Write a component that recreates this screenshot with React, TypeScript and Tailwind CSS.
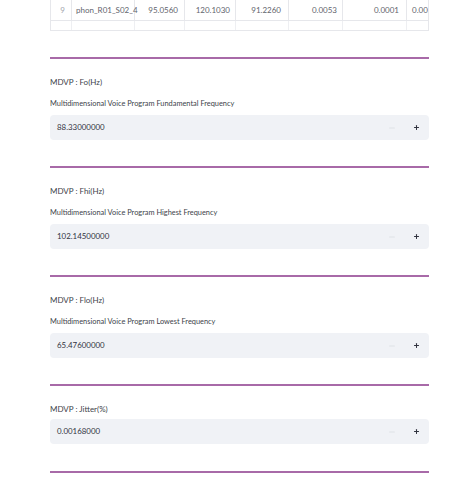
import { Minus, Plus } from 'lucide-react';

const cols = [
  { w: 'w-[21px]', text: '9', cls: 'justify-end pr-[6px] text-[#a3a6ad]' },
  { w: 'w-[63px]', text: 'phon_R01_S02_4', cls: 'justify-start pl-[4px]' },
  { w: 'w-[50px]', text: '95.0560', cls: 'justify-end pr-[6px]' },
  { w: 'w-[51px]', text: '120.1030', cls: 'justify-end pr-[5px]' },
  { w: 'w-[53px]', text: '91.2260', cls: 'justify-end pr-[7px]' },
  { w: 'w-[54px]', text: '0.0053', cls: 'justify-end pr-[5px]' },
  { w: 'w-[64px]', text: '0.0001', cls: 'justify-end pr-[7px]' },
];

const fields = [
  { label: 'MDVP : Fo(Hz)', help: 'Multidimensional Voice Program Fundamental Frequency', value: '88.33000000' },
  { label: 'MDVP : Fhi(Hz)', help: 'Multidimensional Voice Program Highest Frequency', value: '102.14500000' },
  { label: 'MDVP : Flo(Hz)', help: 'Multidimensional Voice Program Lowest Frequency', value: '65.47600000' },
  { label: 'MDVP : Jitter(%)', help: null, value: '0.00168000' },
];

function Divider() {
  return <div className="h-[2px] bg-[#a86aa8]" />;
}

function NumberField({ label, help, value }: { label: string; help: string | null; value: string }) {
  return (
    <div>
      <Divider />
      <div className="mt-[17px] h-[12px] leading-[12px] text-[8px] text-[#3d3f4a]">{label}</div>
      {help && (
        <div className="mt-[10px] h-[12px] leading-[12px] text-[7.4px] text-[#3d3f4a]">{help}</div>
      )}
      <div className={`${help ? 'mt-[5px]' : 'mt-[4px]'} flex h-[25px] items-center rounded-[4px] bg-[#f0f2f6]`}>
        <span className="flex-1 pl-[7px] text-[7.9px] text-[#31333f]">{value}</span>
        <div className="flex h-full w-[25px] items-center justify-center">
          <Minus size={8} strokeWidth={1.5} color="#cfd1d6" />
        </div>
        <div className="flex h-full w-[25px] items-center justify-center">
          <Plus size={7} strokeWidth={3.5} color="#31333f" />
        </div>
      </div>
      <div className={help ? 'h-[26px]' : 'h-[27px]'} />
    </div>
  );
}

export default function App() {
  return (
    <div className="min-h-[486px] w-[474px] bg-white font-[Lato,sans-serif]">
      <div className="ml-[50px] w-[379px]">
        {/* data table, scrolled so only its last row shows */}
        <div className="overflow-hidden border-x border-b border-[#e6e7eb]">
          <div className="flex h-[21px] border-b border-[#e6e7eb] text-[8px] text-[#62646d]">
            {cols.map((c, i) => (
              <div key={i} className={`${c.w} flex shrink-0 items-center whitespace-nowrap border-r border-[#e6e7eb] ${c.cls}`}>
                {c.text}
              </div>
            ))}
            <div className="flex flex-1 items-center overflow-hidden whitespace-nowrap pl-[5px]">0.0057</div>
          </div>
          <div className="flex h-[9px]">
            {cols.map((c, i) => (
              <div key={i} className={`${c.w} shrink-0 border-r border-[#eeeff2]`} />
            ))}
          </div>
        </div>
        <div className="h-[26px]" />
        {fields.map(f => (
          <NumberField key={f.label} {...f} />
        ))}
        <Divider />
      </div>
    </div>
  );
}
